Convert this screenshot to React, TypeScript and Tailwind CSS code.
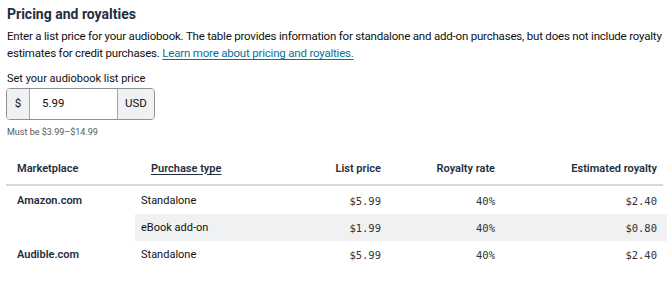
import React from "react";

const rows = [
  { m: "Amazon.com", t: "Standalone", p: "$5.99", r: "40%", e: "$2.40", shade: false },
  { m: "", t: "eBook add-on", p: "$1.99", r: "40%", e: "$0.80", shade: true },
  { m: "Audible.com", t: "Standalone", p: "$5.99", r: "40%", e: "$2.40", shade: false },
];

const grid = "grid grid-cols-[129px_155px_101px_114px_162px]";
const mono = "font-['DejaVu_Sans_Mono',monospace] text-[10.5px] text-[#333]";

export default function App() {
  return (
    <div className="w-[670px] h-[300px] bg-white font-['Roboto',sans-serif] text-[#0f1111] px-[7px] pt-[3px]">
      <h1 className="text-[14px] font-bold text-[#232f3e] leading-[22px]">Pricing and royalties</h1>
      <p className="mt-[3px] text-[11.5px] tracking-[-0.2px] leading-[17px] text-[#0f1111] w-[664px]">
        Enter a list price for your audiobook. The table provides information for standalone and add-on purchases, but does not include royalty estimates for credit purchases.{" "}
        <a className="text-[#077398] underline underline-offset-2">Learn more about pricing and royalties.</a>
      </p>
      <div className="mt-[9px] text-[11px] leading-[16px]">Set your audiobook list price</div>
      <div className="mt-[1px] flex h-[32px] w-[149px] rounded-[4px] border border-[#8d9096] overflow-hidden text-[11.5px] ml-[-1px]">
        <div className="w-[23px] bg-[#f0f1f2] border-r border-[#a6a6a6] flex items-center justify-center">$</div>
        <div className="flex-1 flex items-center pl-[12px] bg-white">5.99</div>
        <div className="w-[37px] bg-[#f0f1f2] border-l border-[#a6a6a6] flex items-center justify-center">USD</div>
      </div>
      <div className="mt-[5px] text-[9px] leading-[14px] text-[#565959]">Must be $3.99–$14.99</div>
      <div className="mt-[15px] ml-[-1px]">
        <div className={`${grid} h-[32px] items-center text-[11px] font-semibold text-[#232f3e] border-b-2 border-[#d5d9d9]`}>
          <div className="pl-[11px]">Marketplace</div>
          <div className="pl-[16px]"><span className="underline underline-offset-2">Purchase type</span></div>
          <div className="text-right pr-[10px]">List price</div>
          <div className="text-right pr-[10px]">Royalty rate</div>
          <div className="text-right pr-[10px]">Estimated royalty</div>
        </div>
        <div className="pt-[1px]">
          {rows.map((r, i) => (
            <div key={i} className={`${grid} h-[27px] items-stretch text-[11px]`}>
              <div className="pl-[11px] pt-[2px] flex items-center font-semibold text-[#232f3e]">{r.m}</div>
              <div className={`pl-[6px] pt-[2px] flex items-center ${r.shade ? "bg-[#f0f1f2]" : ""}`}>{r.t}</div>
              <div className={`pr-[10px] pt-[2px] flex items-center justify-end ${mono} ${r.shade ? "bg-[#f0f1f2]" : ""}`}>{r.p}</div>
              <div className={`pr-[10px] pt-[2px] flex items-center justify-end ${mono} ${r.shade ? "bg-[#f0f1f2]" : ""}`}>{r.r}</div>
              <div className={`pr-[10px] pt-[2px] flex items-center justify-end ${mono} ${r.shade ? "bg-[#f0f1f2]" : ""}`}>{r.e}</div>
            </div>
          ))}
        </div>
      </div>
    </div>
  );
}
